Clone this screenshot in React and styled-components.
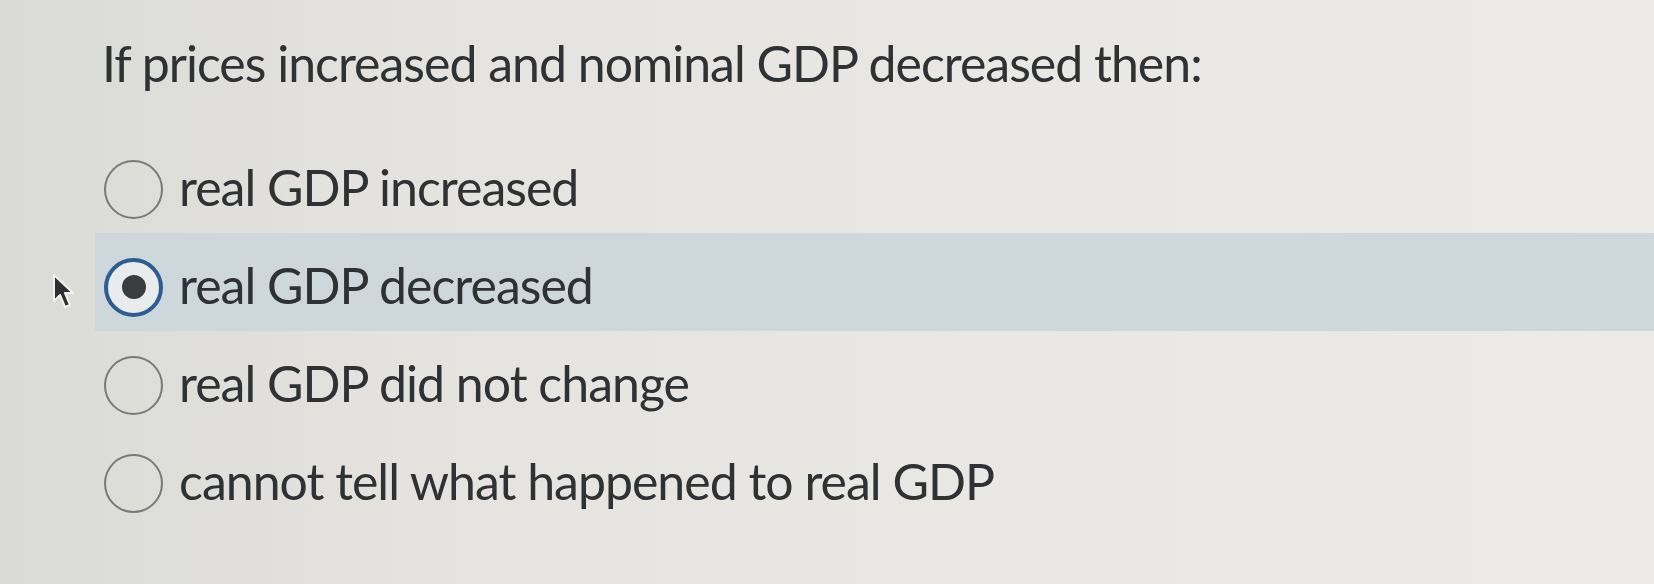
import React from "react";
import styled, { createGlobalStyle } from "styled-components";

const Global = createGlobalStyle`
  html, body {
    margin: 0;
    padding: 0;
  }
  body {
    width: 1654px;
    height: 584px;
    overflow: hidden;
    background: linear-gradient(90deg, #dadad6 0%, #e4e3df 25%, #e9e8e4 60%, #ebeae6 100%);
    font-family: Lato, "Open Sans", "Liberation Sans", sans-serif;
    color: #2f3235;
  }
`;

const options = [
  "real GDP increased",
  "real GDP decreased",
  "real GDP did not change",
  "cannot tell what happened to real GDP",
];

const Page = styled.div`
  padding: 33px 0 0 95px;
`;

const Question = styled.div`
  font-size: 50px;
  line-height: 60px;
  letter-spacing: -1px;
  padding-left: 7px;
  margin-bottom: 42px;
`;

const List = styled.div`
  display: flex;
  flex-direction: column;
`;

const Row = styled.label`
  position: relative;
  display: flex;
  align-items: center;
  gap: 16px;
  height: 98px;
  box-sizing: border-box;
  padding: 22px 0 16px 9px;
  background: ${(p) => (p.$selected ? "#cdd7dc" : "transparent")};
`;

const Radio = styled.span`
  flex: none;
  box-sizing: border-box;
  width: 59px;
  height: 59px;
  margin-top: 4px;
  border-radius: 50%;
  display: flex;
  align-items: center;
  justify-content: center;
  border: ${(p) => (p.$checked ? "4px solid #2b5e91" : "2px solid #77797c")};
  background: ${(p) => (p.$checked ? "#e9ebec" : "transparent")};
`;

const Dot = styled.span`
  width: 24px;
  height: 24px;
  border-radius: 50%;
  background: #3a3d40;
`;

const Label = styled.span`
  font-size: 50px;
  line-height: 60px;
  letter-spacing: -1px;
`;

const Cursor = styled.svg`
  position: absolute;
  left: -44px;
  top: 39px;
`;

export default function App() {
  return (
    <>
      <Global />
      <Page>
        <Question>If prices increased and nominal GDP decreased then:</Question>
        <List>
          {options.map((text, i) => (
            <Row key={text} $selected={i === 1}>
              {i === 1 && (
                <Cursor width="26" height="40" viewBox="0 0 26 40">
                  <path
                    d="M3 3 L3 29 L9 23 L14 35 L19 33 L14 21 L22 21 Z"
                    fill="#2c2e30"
                    stroke="#f2f2f0"
                    strokeWidth="2"
                    strokeLinejoin="round"
                  />
                </Cursor>
              )}
              <Radio $checked={i === 1}>{i === 1 && <Dot />}</Radio>
              <Label>{text}</Label>
            </Row>
          ))}
        </List>
      </Page>
    </>
  );
}
